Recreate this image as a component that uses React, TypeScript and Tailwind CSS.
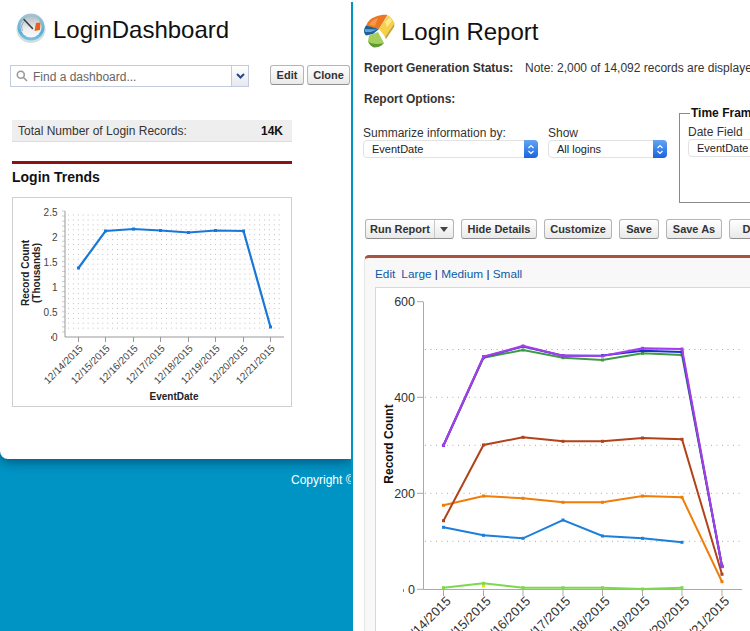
import React from "react";

const FONT = "font-['Liberation_Sans',Arial,sans-serif]";

function GaugeIcon() {
  return (
    <svg width="30" height="30" viewBox="0 0 30 30" className="shrink-0">
      <defs>
        <linearGradient id="ring" x1="0" y1="0" x2="0" y2="1">
          <stop offset="0" stopColor="#a9c4cf" />
          <stop offset="0.7" stopColor="#55b0da" />
          <stop offset="1" stopColor="#7cc4e2" />
        </linearGradient>
        <linearGradient id="face" x1="0" y1="0" x2="0" y2="1">
          <stop offset="0" stopColor="#b9bfc4" />
          <stop offset="0.6" stopColor="#eceef0" />
          <stop offset="1" stopColor="#f8f9fa" />
        </linearGradient>
      </defs>
      <ellipse cx="15" cy="16.5" rx="14.500" ry="13.500" fill="#d5dde0" />
      <circle cx="15" cy="14" r="13.500" fill="url(#ring)" />
      <circle cx="15" cy="14" r="10.500" fill="url(#face)" />
      <path d="M6.500 18a9 9 0 0 1 1.500-9.500" stroke="#8a949b" strokeWidth="0.8" fill="none" />
      <path d="M8 6.500 16.500 15.500" stroke="#333a40" strokeWidth="1.500" strokeLinecap="round" />
      <path d="M20 10 24.500 9.500 24 17 18.500 18Z" fill="#e8601c" />
    </svg>
  );
}

function PieIcon() {
  return (
    <svg width="32" height="34" viewBox="0 0 32 34" className="shrink-0">
      <path d="M16 15 3 12C5 7 8 4 13 2.500 17 1 21 0.500 24.500 1Z" fill="#ec7722" />
      <path d="M6 11C8 7 11 5 15 4L12 12Z" fill="#f2994a" />
      <path d="M16 15 25 1.200C28 3 30 6 31.500 9L22 23C20 20 18 17 16 15Z" fill="#f5d04a" />
      <path d="M22 23 31.500 9 31 13 23 25Z" fill="#c9a131" />
      <path d="M22 8 26.500 3.500 29 7 24 13Z" fill="#fbe893" />
      <path d="M1 17C1 15 2 13 3 11.500L16 15 10 20 3 21.500C1.800 20 1 19 1 17Z" fill="#1f5f97" />
      <path d="M2 15 14.500 15.500 8 18 2 18Z" fill="#5aa7d8" />
      <path d="M6 21.500 15 18 21 29C18 32 15 33 11 33 8 32 6 30 5 27Z" fill="#a5cf5c" />
      <path d="M5 27C7 30 15 31 21 29 18 32.500 15 33.500 11 33.500 8 32.500 6 30 5 27Z" fill="#5d9a33" />
    </svg>
  );
}

function Btn({ w, children }: { w: string; children: React.ReactNode }) {
  return (
    <div
      className={`${w} h-[20px] shrink-0 flex items-center justify-center rounded-[3px] border border-[#b5b5b5] border-b-[#8f8f8f] bg-gradient-to-b from-white to-[#e9e9e9] text-[11px] leading-none font-bold text-[#333]`}
    >
      {children}
    </div>
  );
}

function SelectBox({ w, label }: { w: string; label: string }) {
  return (
    <div className={`${w} h-[18px] shrink-0 flex items-center rounded-[4px] border border-[#e2e2e2] bg-white pl-[8px] text-[11px] leading-none text-[#222]`}>
      <span className="flex-1 whitespace-nowrap">{label}</span>
      <span className="w-[14px] h-[18px] -mr-px shrink-0 rounded-r-[4px] bg-gradient-to-b from-[#62a4f3] to-[#1a62df] flex items-center justify-center">
        <svg width="8" height="13" viewBox="0 0 8 13" fill="none" stroke="#fff" strokeWidth="1.200">
          <path d="M1.500 5 4 2.500 6.500 5M1.500 8 4 10.500 6.500 8" />
        </svg>
      </span>
    </div>
  );
}

const smallX = [78.5, 105.5, 133.5, 160.5, 188.5, 215.5, 243.5, 270.5];
const smallY = [268, 231, 229, 230.5, 232.5, 230.5, 231, 327];
const smallDates = ["12/14/2015", "12/15/2015", "12/16/2015", "12/17/2015", "12/18/2015", "12/19/2015", "12/20/2015", "12/21/2015"];

function pts(xs: number[], ys: number[]) {
  return ys.map((y, i) => `${xs[i]},${y}`).join(" ");
}

function SmallChart() {
  const rows: number[] = [];
  for (let y = 215; y <= 333; y += 4.92) rows.push(y);
  const ticks: number[] = [];
  for (let y = 211; y <= 337; y += 5.04) ticks.push(y);
  return (
    <svg width="278" height="208" viewBox="13 198 278 208" className="block">
      {rows.map((y) => (
        <line key={y} x1="68" x2="281" y1={y} y2={y} stroke="#b0b0b0" strokeWidth="0.8" strokeDasharray="1 3.900" />
      ))}
      {ticks.map((y) => (
        <line key={y} x1="62" x2="65" y1={y} y2={y} stroke="#c0c0c0" strokeWidth="0.8" />
      ))}
      <path d="M65 211V337H284" fill="none" stroke="#999" strokeWidth="1" />
      {[["2.5", 212], ["2", 237], ["1.5", 262], ["1", 287], ["0.5", 312], ["0", 337]].map(([t, y]) => (
        <text key={t} x="57.500" y={Number(y) + 3.500} textAnchor="end" fontSize="10" fill="#444">
          {t}
        </text>
      ))}
      <rect x="51" y="336" width="1" height="3" fill="#777" />
      {smallX.map((x, i) => (
        <g key={x}>
          <line x1={x} x2={x} y1="337" y2="342" stroke="#999" />
          <text x={x + 5} y="349" textAnchor="end" fontSize="10" fill="#444" transform={`rotate(-45 ${x + 5} 349)`}>
            {smallDates[i]}
          </text>
        </g>
      ))}
      <polyline points={pts(smallX, smallY)} fill="none" stroke="#1878d8" strokeWidth="2.200" />
      {smallX.map((x, i) => (
        <rect key={x} x={x - 1.500} y={smallY[i] - 1.500} width="3" height="3" fill="#1878d8" />
      ))}
      <text x="29" y="273" textAnchor="middle" fontSize="10" fontWeight="700" fill="#222" transform="rotate(-90 29 273)">
        Record Count
      </text>
      <text x="40" y="273" textAnchor="middle" fontSize="10" fontWeight="700" fill="#222" transform="rotate(-90 40 273)">
        (Thousands)
      </text>
      <text x="174" y="400" textAnchor="middle" fontSize="10" fontWeight="700" fill="#222">
        EventDate
      </text>
    </svg>
  );
}

const bigX = [443.5, 483.5, 523, 563, 602.5, 642.5, 682, 722];
const series: { c: string; w: number; y: number[] }[] = [
  { c: "#7ed84e", w: 2, y: [587.7, 583.3, 587.7, 587.7, 587.7, 589, 587.7] },
  { c: "#1c7fdc", w: 2, y: [527.3, 535.3, 538.3, 520, 536, 538.3, 542.3] },
  { c: "#f07d0a", w: 2, y: [505.3, 496, 498.3, 502.3, 502.3, 496, 497.3, 581.7] },
  { c: "#b0431a", w: 2, y: [520.7, 445, 437.3, 441.3, 441.3, 438, 439.3, 574.3] },
  { c: "#3e9a45", w: 2, y: [445.5, 357.7, 350, 357.7, 360, 353.3, 355, 566] },
  { c: "#1d2fd0", w: 2, y: [445.3, 357, 346.5, 355.7, 355.5, 350.7, 352, 566.5] },
  { c: "#a23fe8", w: 2.2, y: [445.3, 356.7, 346, 355.7, 356, 348.3, 349, 566.7] },
];

function BigChart() {
  const dotted = [349.5, 397.3, 445.3, 493.3, 541.3];
  return (
    <svg width="375" height="345" viewBox="376 288 375 345" className="block">
      {dotted.map((y) => (
        <line key={y} x1="425" x2="741" y1={y} y2={y} stroke="#aaa" strokeWidth="1" strokeDasharray="1 4.500" />
      ))}
      <path d="M423.500 302V589.500H742" fill="none" stroke="#aaa" strokeWidth="1" />
      {[["600", 301.7], ["400", 397.3], ["200", 493.3], ["0", 589.3]].map(([t, y]) => (
        <g key={t}>
          <line x1="417" x2="423.500" y1={y} y2={y} stroke="#aaa" />
          <text x="415" y={Number(y) + 4.500} textAnchor="end" fontSize="12.500" fill="#333">
            {t}
          </text>
        </g>
      ))}
      <rect x="403" y="589" width="1" height="3" fill="#888" />
      {bigX.map((x, i) => (
        <g key={x}>
          <line x1={x} x2={x} y1="589.500" y2="596" stroke="#aaa" />
          <text x={x + 8} y="602" textAnchor="end" fontSize="13" fill="#333" transform={`rotate(-45 ${x + 8} 602)`}>
            {smallDates[i]}
          </text>
        </g>
      ))}
      <text x="392.500" y="444" textAnchor="middle" fontSize="12" fontWeight="700" fill="#111" transform="rotate(-90 392.500 444)">
        Record Count
      </text>
      <rect x="482" y="584.500" width="3" height="3" fill="#f2dc10" />
      {series.map((s) => (
        <g key={s.c}>
          <polyline points={pts(bigX, s.y)} fill="none" stroke={s.c} strokeWidth={s.w} />
          {s.y.map((y, i) => (
            <rect key={i} x={bigX[i] - 1.500} y={y - 1.500} width="3" height="3" fill={s.c} />
          ))}
        </g>
      ))}
    </svg>
  );
}

export default function App() {
  return (
    <div className={`${FONT} flex w-[750px] h-[631px] overflow-hidden bg-white text-[#222]`}>
      {/* Left column */}
      <div className="w-[351px] h-[631px] shrink-0 overflow-hidden bg-[#0094c4] flex flex-col">
        <div className="w-[351px] h-[459px] shrink-0 bg-white rounded-bl-[8px] shadow-[0_3px_12px_rgba(0,40,70,0.55)] flex flex-col relative">
          <div className="flex items-center gap-[7px] pl-[16px] pt-[13px] h-[43px]">
            <GaugeIcon />
            <h1 className="mt-[4px] text-[24px] leading-[30px] text-[#111]">LoginDashboard</h1>
          </div>
          <div className="flex items-start pl-[10px] mt-[22px]">
            <div className="w-[239px] h-[22px] flex border border-[#c3cbde] bg-white">
              <div className="flex-1 flex items-center pl-[5px] gap-[5px] text-[12px] text-[#666]">
                <svg width="12" height="12" viewBox="0 0 12 12" fill="none" stroke="#9a9a9a" strokeWidth="1.600">
                  <circle cx="4.800" cy="4.800" r="3.500" />
                  <path d="M7.500 7.500 11 11" />
                </svg>
                <span className="pt-[2px]">Find a dashboard...</span>
              </div>
              <div className="w-[17px] border-l border-[#c3cbde] bg-gradient-to-b from-white to-[#e6e9f0] flex items-center justify-center">
                <svg width="9" height="6" viewBox="0 0 9 6" fill="none" stroke="#27458c" strokeWidth="2">
                  <path d="M1 1 4.500 4.500 8 1" />
                </svg>
              </div>
            </div>
            <div className="ml-[21px] flex gap-[3px]">
              <Btn w="w-[34px]">Edit</Btn>
              <Btn w="w-[43px]">Clone</Btn>
            </div>
          </div>
          <div className="ml-[12px] mt-[33px] w-[280px] h-[22px] flex items-center justify-between bg-[#eeeeee] border-b border-[#ddd] pl-[6px] pr-[9px] text-[12px]">
            <span className="text-[#333]">Total Number of Login Records:</span>
            <span className="font-bold text-[#111]">14K</span>
          </div>
          <div className="ml-[12px] mt-[19px] w-[280px] h-[3px] bg-[#8e1010]" />
          <div className="ml-[12px] mt-[4px] text-[14px] leading-[18px] font-bold text-[#111]">Login Trends</div>
          <div className="ml-[12px] mt-[11px] w-[280px] h-[210px] border border-[#cfcfcf] bg-white">
            <SmallChart />
          </div>
        </div>
        <div className="pl-[291px] pt-[14px] whitespace-nowrap text-[12px] leading-[14px] text-white">
          Copyright © 2000-2015 salesforce.com, inc.
        </div>
      </div>

      {/* Divider */}
      <div className="w-[2px] mt-[2px] shrink-0 bg-[#0094c4]" />

      {/* Right column */}
      <div className="flex-1 min-w-0 h-[631px] overflow-hidden bg-white">
        <div className="w-[500px] flex flex-col">
          <div className="flex items-center gap-[6px] pl-[10px] pt-[14px] h-[48px]">
            <PieIcon />
            <h1 className="mt-[2px] text-[24px] leading-[30px] text-[#111]">Login Report</h1>
          </div>
          <div className="flex ml-[11px] mt-[13px] text-[12px] leading-[14px] whitespace-nowrap text-[#333]">
            <span className="font-bold w-[161px]">Report Generation Status:</span>
            <span>Note: 2,000 of 14,092 records are displayed</span>
          </div>
          <div className="ml-[11px] mt-[17px] text-[12px] leading-[14px] font-bold text-[#333]">Report Options:</div>
          <div className="flex items-start pl-[10px]">
            <div className="mt-[20px]">
              <div className="text-[12px] leading-[14px] text-[#333] whitespace-nowrap">Summarize information by:</div>
              <SelectBox w="w-[175px]" label="EventDate" />
            </div>
            <div className="ml-[10px] mt-[20px]">
              <div className="text-[12px] leading-[14px] text-[#333]">Show</div>
              <SelectBox w="w-[119px]" label="All logins" />
            </div>
            <fieldset className="ml-[12px] w-[160px] h-[97px] border border-[#8a8a8a] pl-[8px]">
              <legend className="ml-[2px] px-[1px] text-[12px] leading-[15px] font-bold text-[#111]">Time Frame</legend>
              <div className="text-[12px] leading-[14px] mt-[4px] text-[#333]">Date Field</div>
              <SelectBox w="w-[140px]" label="EventDate" />
            </fieldset>
          </div>
          <div className="flex gap-[7px] ml-[12px] mt-[16px]">
            <div className="w-[89px] h-[20px] shrink-0 flex rounded-[3px] border border-[#b5b5b5] border-b-[#8f8f8f] bg-gradient-to-b from-white to-[#e9e9e9] text-[11px] leading-none font-bold text-[#333]">
              <span className="w-[69px] flex items-center justify-center border-r border-[#c8c8c8]">Run Report</span>
              <span className="flex-1 flex items-center justify-center">
                <svg width="8" height="5" viewBox="0 0 8 5">
                  <path d="M0 0H8L4 5Z" fill="#444" />
                </svg>
              </span>
            </div>
            <Btn w="w-[76px]">Hide Details</Btn>
            <Btn w="w-[68px]">Customize</Btn>
            <Btn w="w-[40px]">Save</Btn>
            <Btn w="w-[56px]">Save As</Btn>
            <Btn w="w-[60px]">Delete</Btn>
          </div>
          <div className="ml-[11px] mt-[16px] w-[500px] h-[400px] rounded-tl-[5px] border-t-[3px] border-l border-t-[#a9523f] border-l-[#e6e6e6] bg-[#f8f8f8] pl-[10px]">
            <div className="h-[29px] pt-[9px] text-[11.800px] leading-[15px] whitespace-nowrap text-[#222]">
              <span className="text-[#0a5ba8]">Edit</span>
              <span className="ml-[6px] text-[#0a5ba8]">Large</span> | <span className="text-[#0a5ba8]">Medium</span> | <span className="text-[#0a5ba8]">Small</span>
            </div>
            <div className="w-[500px] h-[360px] border-t border-l border-[#d8d8d8] bg-white">
              <BigChart />
            </div>
          </div>
        </div>
      </div>
    </div>
  );
}
